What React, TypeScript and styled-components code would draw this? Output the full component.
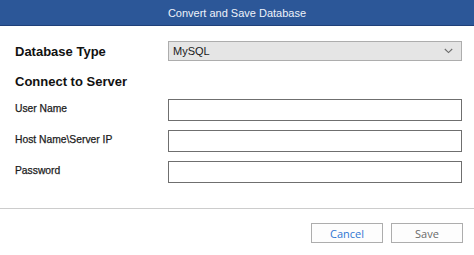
import * as React from 'react';
import styled, { createGlobalStyle } from 'styled-components';

const GlobalStyle = createGlobalStyle`
  html, body {
    margin: 0;
    padding: 0;
    background: #ffffff;
  }
  body {
    font-family: 'Liberation Sans', Arial, sans-serif;
  }
`;

const Dialog = styled.div`
  width: 474px;
  height: 255px;
  display: flex;
  flex-direction: column;
  background: #ffffff;
  box-sizing: border-box;
`;

const TitleBar = styled.div`
  height: 25px;
  flex: none;
  display: flex;
  align-items: center;
  justify-content: center;
  background: #2c5798;
  border-bottom: 1px solid #1f4079;
  color: #eef2fa;
  font-size: 11px;
`;

const Body = styled.div`
  flex: 1;
  display: flex;
  flex-direction: column;
  padding: 15px 12px 0 15px;
`;

const Row = styled.div<{ $gap?: number }>`
  display: grid;
  grid-template-columns: 153px 294px;
  align-items: center;
  margin-top: ${(p) => p.$gap ?? 0}px;
`;

const MainLabel = styled.div`
  font-size: 13px;
  font-weight: bold;
  color: #111111;
`;

const Heading = styled.div`
  margin-top: 13px;
  height: 16px;
  line-height: 16px;
  font-size: 13px;
  font-weight: bold;
  color: #111111;
`;

const FieldLabel = styled.label`
  font-size: 10.3px;
  color: #1c1c1c;
  padding-bottom: 3px;
  -webkit-text-stroke: 0.25px #1c1c1c;
`;

const Select = styled.div`
  height: 20px;
  box-sizing: border-box;
  display: flex;
  align-items: center;
  justify-content: space-between;
  padding: 0 8px 0 4px;
  background: #e5e5e5;
  border: 1px solid #adadad;
  font-size: 11px;
  color: #1a1a1a;
`;

const TextInput = styled.input`
  height: 22px;
  width: 294px;
  box-sizing: border-box;
  margin: 0;
  border: 1px solid #6f6f6f;
  background: #ffffff;
  outline: none;
  padding: 0 4px;
`;

const Footer = styled.div`
  height: 47px;
  flex: none;
  display: flex;
  justify-content: flex-end;
  align-items: flex-start;
  gap: 8px;
  padding: 14px 11px 0 0;
  box-sizing: border-box;
  border-top: 1px solid #cccccc;
`;

const Button = styled.button<{ $primary?: boolean }>`
  width: 72px;
  height: 20px;
  box-sizing: border-box;
  margin: 0;
  padding: 0;
  background: #fdfdfd;
  border: 1px solid #adadad;
  font-family: 'Open Sans', 'Liberation Sans', sans-serif;
  font-size: 11px;
  color: ${(p) => (p.$primary ? '#2f76d2' : '#6a6a6a')};
`;

const Chevron = () => (
  <svg width="9" height="6" viewBox="0 0 9 6">
    <path d="M0.8 1 L4.5 4.6 L8.2 1" fill="none" stroke="#6b6b6b" strokeWidth="1.1" />
  </svg>
);

const fields = ['User Name', 'Host Name\\Server IP', 'Password'];

export default function App() {
  return (
    <>
      <GlobalStyle />
      <Dialog>
        <TitleBar>Convert and Save Database</TitleBar>
        <Body>
          <Row>
            <MainLabel>Database Type</MainLabel>
            <Select>
              <span>MySQL</span>
              <Chevron />
            </Select>
          </Row>
          <Heading>Connect to Server</Heading>
          {fields.map((f, i) => (
            <Row key={f} $gap={i === 0 ? 9 : 9}>
              <FieldLabel>{f}</FieldLabel>
              <TextInput type={f === 'Password' ? 'password' : 'text'} />
            </Row>
          ))}
        </Body>
        <Footer>
          <Button $primary>Cancel</Button>
          <Button>Save</Button>
        </Footer>
      </Dialog>
    </>
  );
}
